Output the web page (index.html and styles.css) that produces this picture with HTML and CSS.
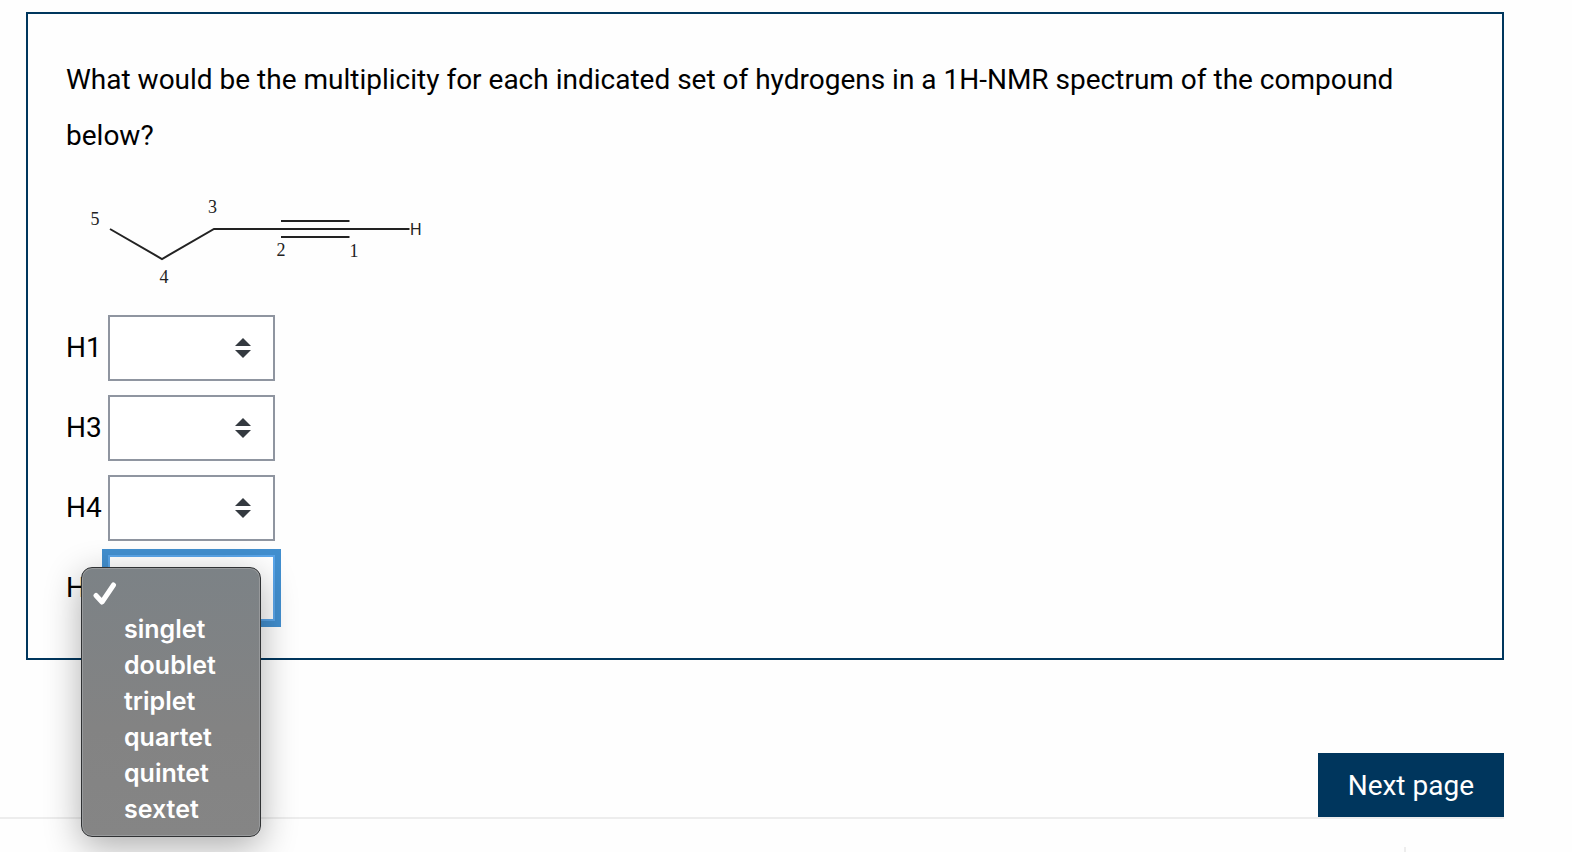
FILE: index.html
```html
<!DOCTYPE html>
<html lang="en">
<head>
<meta charset="utf-8">
<title>Multiplicity quiz</title>
<link rel="stylesheet" href="styles.css">
</head>
<body>
<main class="page">
  <form class="quiz">
    <section class="question">
      <p class="prompt">What would be the multiplicity for each indicated set of hydrogens in a 1H-NMR spectrum of the compound below?</p>
      <svg class="molecule" width="380" height="112" viewBox="0 0 380 112" role="img" aria-label="1-pentyne with numbered carbons">
        <g class="bonds">
          <path d="M44 29L96 59L148 29H343.500"/>
          <path d="M215 21H283.500M215 37H283.500"/>
        </g>
        <g class="locants">
          <text x="24.500" y="25">5</text>
          <text x="142" y="12.500">3</text>
          <text x="93.500" y="83">4</text>
          <text x="210.500" y="55.500">2</text>
          <text x="283.500" y="57">1</text>
        </g>
        <text class="atom" x="344" y="35">H</text>
      </svg>
      <div class="answers">
        <div class="answer">
          <label class="answer-label" for="h1">H1</label>
          <select class="answer-select" id="h1"><option></option><option>singlet</option><option>doublet</option><option>triplet</option><option>quartet</option><option>quintet</option><option>sextet</option></select>
          <svg class="arrows" width="16" height="20" viewBox="0 0 16 20" aria-hidden="true"><path d="M8 0L16 8H0ZM0 12H16L8 20Z"/></svg>
        </div>
        <div class="answer">
          <label class="answer-label" for="h3">H3</label>
          <select class="answer-select" id="h3"><option></option><option>singlet</option><option>doublet</option><option>triplet</option><option>quartet</option><option>quintet</option><option>sextet</option></select>
          <svg class="arrows" width="16" height="20" viewBox="0 0 16 20" aria-hidden="true"><path d="M8 0L16 8H0ZM0 12H16L8 20Z"/></svg>
        </div>
        <div class="answer">
          <label class="answer-label" for="h4">H4</label>
          <select class="answer-select" id="h4"><option></option><option>singlet</option><option>doublet</option><option>triplet</option><option>quartet</option><option>quintet</option><option>sextet</option></select>
          <svg class="arrows" width="16" height="20" viewBox="0 0 16 20" aria-hidden="true"><path d="M8 0L16 8H0ZM0 12H16L8 20Z"/></svg>
        </div>
        <div class="answer">
          <label class="answer-label" for="h5">H5</label>
          <select class="answer-select is-open" id="h5"><option></option><option>singlet</option><option>doublet</option><option>triplet</option><option>quartet</option><option>quintet</option><option>sextet</option></select>
          <ul class="menu" role="listbox" aria-label="H5 options">
            <li class="menu-item" role="option" aria-selected="true" aria-label="No answer"><svg class="check" width="24" height="26" viewBox="0 0 24 26" aria-hidden="true"><path d="M3 14.500L9 21L20.500 4"/></svg></li>
            <li class="menu-item" role="option">singlet</li>
            <li class="menu-item" role="option">doublet</li>
            <li class="menu-item" role="option">triplet</li>
            <li class="menu-item" role="option">quartet</li>
            <li class="menu-item" role="option">quintet</li>
            <li class="menu-item" role="option">sextet</li>
          </ul>
        </div>
      </div>
    </section>
    <div class="actions">
      <button class="next" type="submit">Next page</button>
    </div>
  </form>
  <footer class="footer"><span class="divider"></span></footer>
</main>
</body>
</html>
```
FILE: styles.css
```css
* {
  box-sizing: border-box;
}

body {
  margin: 0;
  background: #fefefe;
  color: #000;
  font-family: Roboto, sans-serif;
  font-size: 28px;
}

.page {
  padding: 12px 68px 0 0;
}

.quiz {
  padding-left: 26px;
}

.question {
  padding: 38px 38px 37px;
  border: 2px solid #00365d;
}

.prompt {
  margin: 0;
  line-height: 56px;
}

.molecule {
  display: block;
  margin-top: 36px;
  overflow: visible;
}

.bonds {
  fill: none;
  stroke: #222;
  stroke-width: 2;
}

.locants {
  fill: #222;
  font-family: "Liberation Serif", serif;
  font-size: 18px;
}

.atom {
  fill: #222;
  font-family: "Liberation Sans", sans-serif;
  font-size: 16px;
}

.answers {
  display: grid;
  gap: 14px;
  margin-top: 3px;
}

.answer {
  position: relative;
  display: grid;
  grid-template-columns: 42px 167px;
  align-items: center;
}

.answer-label {
  padding-bottom: 2px;
}

.answer-select {
  grid-area: 1 / 2;
  height: 66px;
  padding: 0 40px 0 16px;
  appearance: none;
  border: 2px solid #8f95a0;
  border-radius: 0;
  background: #fff;
  color: #343a40;
  font: inherit;
}

.arrows {
  grid-area: 1 / 2;
  justify-self: end;
  margin-right: 24px;
  fill: #343a40;
  pointer-events: none;
}

.is-open {
  border-color: #5aa5e9;
  outline: 6px solid #428fcf;
}

.menu {
  position: absolute;
  top: 12px;
  left: 15px;
  z-index: 1;
  width: 180px;
  margin: 0;
  padding: 8px 11px;
  list-style: none;
  border: 1px solid #303234;
  border-radius: 11px;
  background: linear-gradient(#7c8286, #838383 60%, #858585);
  box-shadow: inset 0 0 0 1px #989a9c, 0 10px 36px rgba(0, 0, 0, .32);
  color: #fff;
  font-family: Inter, sans-serif;
  font-size: 25px;
  font-weight: 600;
}

.menu-item {
  height: 36px;
  padding-left: 31px;
  line-height: 34px;
}

.menu-item[aria-selected="true"] {
  display: flex;
  align-items: center;
  padding-left: 0;
}

.check {
  fill: none;
  stroke: #fff;
  stroke-width: 5;
  stroke-linecap: round;
  stroke-linejoin: round;
}

.actions {
  display: flex;
  justify-content: flex-end;
  padding-top: 93px;
}

.next {
  height: 64px;
  padding: 0 30px;
  border: 0;
  background: #00365d;
  color: #fff;
  font: inherit;
}

.footer {
  display: flex;
  justify-content: flex-end;
  padding: 28px 98px 0 0;
  border-top: 2px solid #ededed;
}

.divider {
  width: 2px;
  height: 5px;
  background: #ededed;
}
```
